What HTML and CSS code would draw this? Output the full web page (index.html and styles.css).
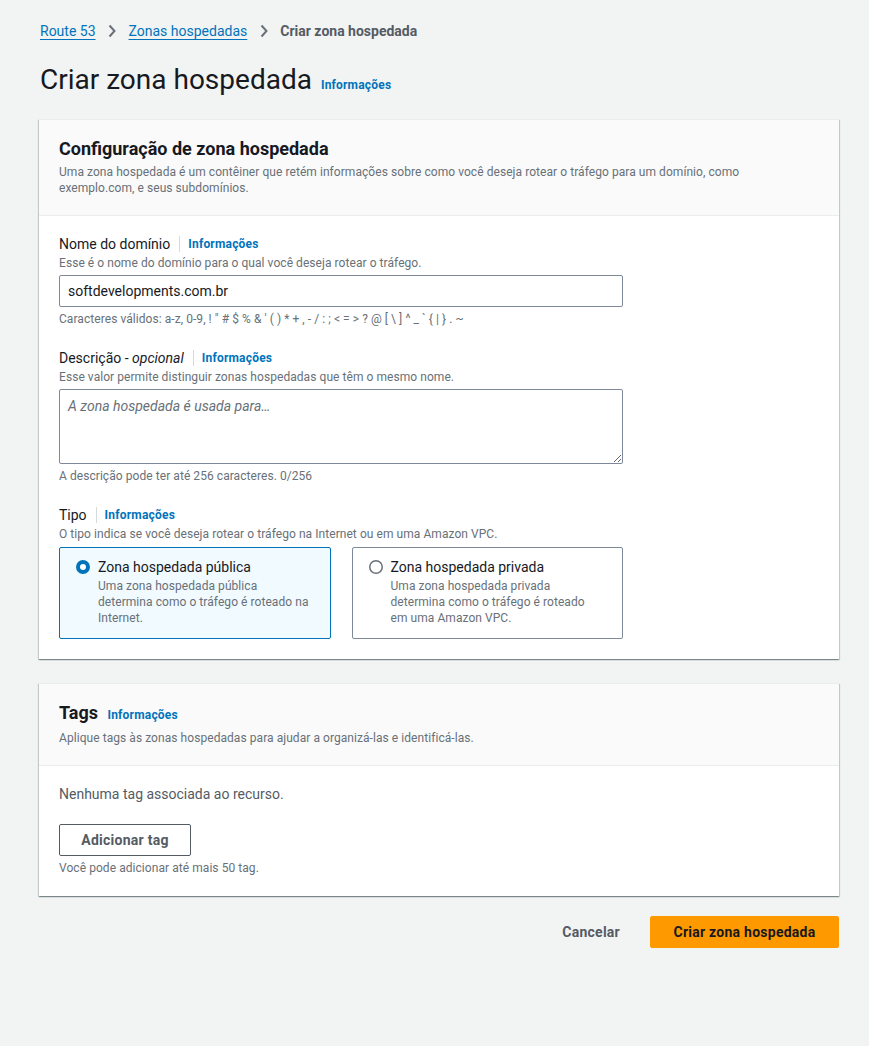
FILE: index.html
```html
<!DOCTYPE html>
<html lang="pt-BR">
<head>
<meta charset="utf-8">
<title>Criar zona hospedada</title>
<link rel="stylesheet" href="styles.css">
</head>
<body>
<div class="page">
  <nav class="breadcrumbs">
    <a class="crumb-link" href="#">Route 53</a>
    <span class="crumb-sep"><svg width="8" height="14" viewBox="0 0 8 14"><path d="M1.5 1.5l5 5.5-5 5.5" fill="none" stroke="#687078" stroke-width="2"/></svg></span>
    <a class="crumb-link" href="#">Zonas hospedadas</a>
    <span class="crumb-sep"><svg width="8" height="14" viewBox="0 0 8 14"><path d="M1.5 1.5l5 5.5-5 5.5" fill="none" stroke="#687078" stroke-width="2"/></svg></span>
    <span class="crumb-current">Criar zona hospedada</span>
  </nav>

  <header class="page-header">
    <h1 class="page-title">Criar zona hospedada</h1>
    <a class="info-link title-info" href="#">Informações</a>
  </header>

  <section class="panel">
    <div class="panel-header">
      <h2 class="panel-title">Configuração de zona hospedada</h2>
      <p class="panel-desc">Uma zona hospedada é um contêiner que retém informações sobre como você deseja rotear o tráfego para um domínio, como<br>exemplo.com, e seus subdomínios.</p>
    </div>
    <div class="panel-body">
      <div class="field">
        <div class="field-label"><span>Nome do domínio</span><a class="info-link sep-info" href="#">Informações</a></div>
        <div class="field-desc">Esse é o nome do domínio para o qual você deseja rotear o tráfego.</div>
        <input class="text-input" type="text" value="softdevelopments.com.br">
        <div class="field-hint">Caracteres válidos: a-z, 0-9, ! " # $ % &amp; ' ( ) * + , - / : ; &lt; = &gt; ? @ [ \ ] ^ _ ` { | } . ~</div>
      </div>

      <div class="field">
        <div class="field-label"><span>Descrição - <i>opcional</i></span><a class="info-link sep-info" href="#">Informações</a></div>
        <div class="field-desc">Esse valor permite distinguir zonas hospedadas que têm o mesmo nome.</div>
        <textarea class="text-area" placeholder="A zona hospedada é usada para…"></textarea>
        <div class="field-hint">A descrição pode ter até 256 caracteres. 0/256</div>
      </div>

      <div class="field">
        <div class="field-label"><span>Tipo</span><a class="info-link sep-info" href="#">Informações</a></div>
        <div class="field-desc">O tipo indica se você deseja rotear o tráfego na Internet ou em uma Amazon VPC.</div>
        <div class="tiles">
          <div class="tile tile-selected">
            <div class="tile-head">
              <svg class="radio" width="14" height="14" viewBox="0 0 14 14"><circle cx="7" cy="7" r="5" fill="#fff" stroke="#0073bb" stroke-width="4"/></svg>
              <span class="tile-label">Zona hospedada pública</span>
            </div>
            <div class="tile-desc">Uma zona hospedada pública<br>determina como o tráfego é roteado na<br>Internet.</div>
          </div>
          <div class="tile">
            <div class="tile-head">
              <svg class="radio" width="14" height="14" viewBox="0 0 14 14"><circle cx="7" cy="7" r="6.25" fill="#fff" stroke="#687078" stroke-width="1.5"/></svg>
              <span class="tile-label">Zona hospedada privada</span>
            </div>
            <div class="tile-desc">Uma zona hospedada privada<br>determina como o tráfego é roteado<br>em uma Amazon VPC.</div>
          </div>
        </div>
      </div>
    </div>
  </section>

  <section class="panel">
    <div class="panel-header">
      <h2 class="panel-title">Tags <a class="info-link tags-info" href="#">Informações</a></h2>
      <p class="panel-desc">Aplique tags às zonas hospedadas para ajudar a organizá-las e identificá-las.</p>
    </div>
    <div class="panel-body tags-body">
      <div class="empty-text">Nenhuma tag associada ao recurso.</div>
      <button class="btn btn-normal" type="button">Adicionar tag</button>
      <div class="field-hint tags-hint">Você pode adicionar até mais 50 tag.</div>
    </div>
  </section>

  <div class="actions">
    <button class="btn btn-link" type="button">Cancelar</button>
    <button class="btn btn-primary" type="button">Criar zona hospedada</button>
  </div>
</div>
</body>
</html>
```

FILE: styles.css
```css
* { box-sizing: border-box; }

html, body {
  margin: 0;
  background: #f2f3f3;
}

body {
  font-family: Roboto, "Liberation Sans", Arial, sans-serif;
  color: #16191f;
  font-size: 14px;
  line-height: 20px;
}

.page {
  padding: 21px 30px 40px 39px;
}

/* breadcrumbs */
.breadcrumbs {
  display: flex;
  align-items: center;
  padding-left: 1px;
  height: 20px;
  font-size: 14px;
  line-height: 20px;
}
.crumb-link {
  color: #0073bb;
  text-decoration: underline;
  text-underline-offset: 3px;
}
.crumb-sep {
  display: inline-flex;
  justify-content: center;
  align-items: center;
  width: 33px;
  height: 20px;
}
.crumb-current {
  color: #545b64;
  font-weight: 700;
}

/* page header */
.page-header {
  display: flex;
  align-items: baseline;
  margin-top: 21px;
  padding-left: 1px;
}
.page-title {
  margin: 0;
  font-size: 28px;
  line-height: 36px;
  font-weight: 400;
  color: #16191f;
}
.info-link {
  color: #0073bb;
  font-size: 12px;
  font-weight: 700;
  text-decoration: none;
  letter-spacing: 0.2px;
}
.title-info { margin-left: 9px; }
.tags-info { margin-left: 5px; }
.sep-info {
  margin-left: 9px;
  padding-left: 8px;
  border-left: 1px solid #d5dbdb;
  line-height: 16px;
}

/* panels */
.panel {
  margin-top: 21px;
  background: #fff;
  box-shadow: 0 1px 1px 0 rgba(0, 28, 36, 0.3), 1px 1px 1px 0 rgba(0, 28, 36, 0.15), -1px 1px 1px 0 rgba(0, 28, 36, 0.15);
  border-top: 1px solid #eaeded;
}
.panel + .panel { margin-top: 24px; }

.panel-header {
  background: #fafafa;
  border-bottom: 1px solid #eaeded;
  padding: 18px 20px 19px;
}
.panel-title {
  margin: 0;
  font-size: 18px;
  line-height: 22px;
  font-weight: 700;
  color: #16191f;
}
.panel-desc {
  margin: 4px 0 0;
  font-size: 12px;
  line-height: 16px;
  letter-spacing: 0.06px;
  color: #687078;
}

.panel-body {
  padding: 17px 20px 20px;
}

/* fields */
.field + .field { margin-top: 20px; }
.field-label {
  display: flex;
  align-items: center;
  font-size: 14px;
  line-height: 22px;
  color: #16191f;
}
.field-desc {
  font-size: 12px;
  line-height: 16px;
  letter-spacing: 0.06px;
  color: #687078;
}
.field-hint {
  margin-top: 4px;
  font-size: 12px;
  line-height: 16px;
  letter-spacing: 0.06px;
  color: #687078;
}

.text-input {
  display: block;
  margin-top: 4px;
  width: 564px;
  height: 32px;
  padding: 0 8px;
  border: 1px solid #7d8998;
  border-radius: 2px;
  font-family: Roboto, "Liberation Sans", Arial, sans-serif;
  font-size: 14px;
  color: #16191f;
  background: #fff;
  outline: none;
}

.text-area {
  display: block;
  margin-top: 4px;
  width: 564px;
  height: 75px;
  padding: 6px 8px;
  border: 1px solid #7d8998;
  border-radius: 2px;
  font-family: Roboto, "Liberation Sans", Arial, sans-serif;
  font-size: 14px;
  line-height: 20px;
  color: #16191f;
  background: #fff;
  outline: none;
}
.text-area::placeholder {
  color: #687078;
  font-style: italic;
}

/* tiles */
.tiles {
  display: flex;
  gap: 21px;
  margin-top: 5px;
  width: 564px;
}
.tile {
  flex: 1;
  border: 1px solid #7d8998;
  border-radius: 2px;
  padding: 9px 8px 12px 16px;
  background: #fff;
}
.tile-selected {
  border-color: #0073bb;
  background: #f1faff;
}
.tile-head {
  display: flex;
  align-items: center;
  gap: 8px;
  height: 20px;
}
.radio { flex: none; }
.tile-label {
  font-size: 14px;
  line-height: 20px;
  color: #16191f;
}
.tile-desc {
  margin-top: 1px;
  padding-left: 22px;
  font-size: 12px;
  line-height: 16px;
  letter-spacing: 0.06px;
  color: #687078;
}

/* tags */
.tags-body { padding-top: 18px; }
.empty-text {
  font-size: 14px;
  line-height: 20px;
  color: #545b64;
}

.btn {
  font-family: Roboto, "Liberation Sans", Arial, sans-serif;
  font-size: 14px;
  font-weight: 700;
  letter-spacing: 0.25px;
  height: 32px;
  padding: 0 20px;
  border-radius: 2px;
  cursor: pointer;
}
.btn-normal {
  display: block;
  margin-top: 20px;
  width: 132px;
  border: 1px solid #545b64;
  background: #fff;
  color: #545b64;
}
.tags-hint { margin-top: 4px; }

.actions {
  display: flex;
  justify-content: flex-end;
  align-items: center;
  gap: 9px;
  margin-top: 20px;
}
.btn-link {
  border: 1px solid transparent;
  background: transparent;
  color: #545b64;
}
.btn-primary {
  width: 189px;
  border: 1px solid #ff9900;
  background: #ff9900;
  color: #16191f;
}
```
